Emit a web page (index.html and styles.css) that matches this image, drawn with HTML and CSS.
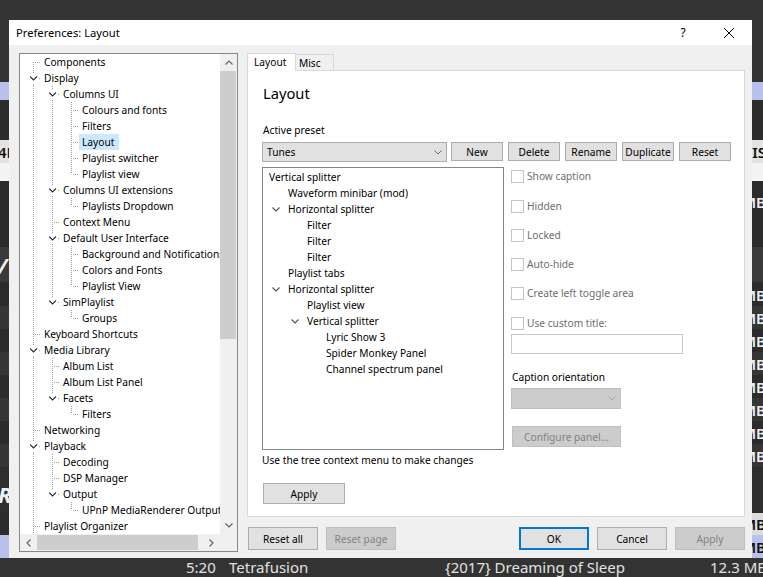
FILE: index.html
```html
<!DOCTYPE html>
<html>
<head>
<meta charset="utf-8">
<link rel="stylesheet" href="styles.css">
</head>
<body>
<div class="bg">
  <div class="bgrow r-top"></div>
  <div class="bgrow r-lav"></div>
  <div class="bgrow r-dark1"></div>
  <div class="bgrow r-light"><span class="bl dk">4K</span><span class="br dk">VIS</span></div>
  <div class="bgrow r-white"></div>
  <div class="bgrow r-dark2"><span class="bl"></span><span class="br">MB</span></div>
  <div class="bgrow r-dark2b"></div>
  <div class="bgrow r-mid"><span class="bl it">/</span><span class="br"></span></div>
  <div class="bgrow r-line"></div>
  <div class="bgrow r-a"><span class="bl"></span><span class="br">MB</span></div>
  <div class="bgrow r-b"><span class="bl"></span><span class="br">MB</span></div>
  <div class="bgrow r-a"><span class="bl"></span><span class="br">MB</span></div>
  <div class="bgrow r-b"><span class="bl"></span><span class="br">MB</span></div>
  <div class="bgrow r-a"><span class="bl"></span><span class="br">MB</span></div>
  <div class="bgrow r-b"><span class="bl"></span><span class="br">MB</span></div>
  <div class="bgrow r-a"><span class="bl"></span><span class="br">MB</span></div>
  <div class="bgrow r-b"><span class="bl"></span><span class="br">MB</span></div>
  <div class="bgrow r-dark3"><span class="bl it">R</span><span class="br"></span></div>
  <div class="bgrow r-light2"><span class="bl"></span><span class="br dk lightbg">MB</span></div>
  <div class="bgrow r-lav2"><span class="bl"></span><span class="br dk">MB</span></div>
  <div class="bgrow r-bottom">
    <span class="c-time">5:20</span><span class="c-title">Tetrafusion</span><span class="c-album">{2017} Dreaming of Sleep</span><span class="c-size">12.3 MB</span>
  </div>
</div>

<div class="dialog">
  <div class="titlebar">
    <span class="title">Preferences: Layout</span>
    <span class="tbtn help">?</span>
    <span class="tbtn close"><svg width="10" height="10" viewBox="0 0 10 10"><path d="M0 0L10 10M10 0L0 10" stroke="#000" stroke-width="1" fill="none"/></svg></span>
  </div>
  <div class="dbody">
    <div class="navtree">
      <div class="navrows">
        <div class="nr"><i class="it b"></i><span class="nl">Components</span></div>
        <div class="nr"><i class="it tb x"><svg class="chev" viewBox="0 0 8 5"><path d="M.5 .5L4 4L7.5 .5"/></svg></i><span class="nl">Display</span></div>
        <div class="nr"><i class="gv"></i><i class="it tb x"><svg class="chev" viewBox="0 0 8 5"><path d="M.5 .5L4 4L7.5 .5"/></svg></i><span class="nl">Columns UI</span></div>
        <div class="nr"><i class="gv"></i><i class="gv"></i><i class="it tb"></i><span class="nl">Colours and fonts</span></div>
        <div class="nr"><i class="gv"></i><i class="gv"></i><i class="it tb"></i><span class="nl">Filters</span></div>
        <div class="nr"><i class="gv"></i><i class="gv"></i><i class="it tb"></i><span class="nl sel">Layout</span></div>
        <div class="nr"><i class="gv"></i><i class="gv"></i><i class="it tb"></i><span class="nl">Playlist switcher</span></div>
        <div class="nr"><i class="gv"></i><i class="gv"></i><i class="it t"></i><span class="nl">Playlist view</span></div>
        <div class="nr"><i class="gv"></i><i class="it tb x"><svg class="chev" viewBox="0 0 8 5"><path d="M.5 .5L4 4L7.5 .5"/></svg></i><span class="nl">Columns UI extensions</span></div>
        <div class="nr"><i class="gv"></i><i class="gv"></i><i class="it t"></i><span class="nl">Playlists Dropdown</span></div>
        <div class="nr"><i class="gv"></i><i class="it tb"></i><span class="nl">Context Menu</span></div>
        <div class="nr"><i class="gv"></i><i class="it tb x"><svg class="chev" viewBox="0 0 8 5"><path d="M.5 .5L4 4L7.5 .5"/></svg></i><span class="nl">Default User Interface</span></div>
        <div class="nr"><i class="gv"></i><i class="gv"></i><i class="it tb"></i><span class="nl">Background and Notifications</span></div>
        <div class="nr"><i class="gv"></i><i class="gv"></i><i class="it tb"></i><span class="nl">Colors and Fonts</span></div>
        <div class="nr"><i class="gv"></i><i class="gv"></i><i class="it t"></i><span class="nl">Playlist View</span></div>
        <div class="nr"><i class="gv"></i><i class="it t x"><svg class="chev" viewBox="0 0 8 5"><path d="M.5 .5L4 4L7.5 .5"/></svg></i><span class="nl">SimPlaylist</span></div>
        <div class="nr"><i class="gv"></i><i class="ge"></i><i class="it t"></i><span class="nl">Groups</span></div>
        <div class="nr"><i class="it tb"></i><span class="nl">Keyboard Shortcuts</span></div>
        <div class="nr"><i class="it tb x"><svg class="chev" viewBox="0 0 8 5"><path d="M.5 .5L4 4L7.5 .5"/></svg></i><span class="nl">Media Library</span></div>
        <div class="nr"><i class="gv"></i><i class="it tb"></i><span class="nl">Album List</span></div>
        <div class="nr"><i class="gv"></i><i class="it tb"></i><span class="nl">Album List Panel</span></div>
        <div class="nr"><i class="gv"></i><i class="it t x"><svg class="chev" viewBox="0 0 8 5"><path d="M.5 .5L4 4L7.5 .5"/></svg></i><span class="nl">Facets</span></div>
        <div class="nr"><i class="gv"></i><i class="ge"></i><i class="it t"></i><span class="nl">Filters</span></div>
        <div class="nr"><i class="it tb"></i><span class="nl">Networking</span></div>
        <div class="nr"><i class="it tb x"><svg class="chev" viewBox="0 0 8 5"><path d="M.5 .5L4 4L7.5 .5"/></svg></i><span class="nl">Playback</span></div>
        <div class="nr"><i class="gv"></i><i class="it tb"></i><span class="nl">Decoding</span></div>
        <div class="nr"><i class="gv"></i><i class="it tb"></i><span class="nl">DSP Manager</span></div>
        <div class="nr"><i class="gv"></i><i class="it t x"><svg class="chev" viewBox="0 0 8 5"><path d="M.5 .5L4 4L7.5 .5"/></svg></i><span class="nl">Output</span></div>
        <div class="nr"><i class="gv"></i><i class="ge"></i><i class="it t"></i><span class="nl">UPnP MediaRenderer Output</span></div>
        <div class="nr"><i class="it tb"></i><span class="nl">Playlist Organizer</span></div>
      </div>
      <div class="vscroll">
        <div class="sbtn"><svg class="arr" viewBox="0 0 8 5"><path d="M.5 4.5L4 1L7.5 4.5"/></svg></div>
        <div class="vthumb"></div>
        <div class="vtrack"></div>
        <div class="sbtn"><svg class="arr" viewBox="0 0 8 5"><path d="M.5 .5L4 4L7.5 .5"/></svg></div>
      </div>
      <div class="hscroll">
        <div class="sbtn"><svg class="arr h" viewBox="0 0 5 8"><path d="M4.5 .5L1 4L4.5 7.5"/></svg></div>
        <div class="hthumb"></div>
        <div class="htrack"></div>
        <div class="sbtn"><svg class="arr h" viewBox="0 0 5 8"><path d="M.5 .5L4 4L.5 7.5"/></svg></div>
      </div>
      <div class="corner"></div>
    </div>

    <div class="rcol">
      <div class="tabs">
        <div class="tab on">Layout</div>
        <div class="tab">Misc</div>
      </div>
      <div class="page">
        <div class="ptitle">Layout</div>
        <div class="plabel">Active preset</div>
        <div class="presetrow">
          <div class="combo"><span>Tunes</span><svg class="cchev" viewBox="0 0 8 5"><path d="M.5 .5L4 4L7.5 .5"/></svg></div>
          <div class="btn pbtn first">New</div>
          <div class="btn pbtn">Delete</div>
          <div class="btn pbtn">Rename</div>
          <div class="btn pbtn">Duplicate</div>
          <div class="btn pbtn">Reset</div>
        </div>
        <div class="pmain">
          <div class="pleft">
            <div class="ltree">
              <div class="lr"><span>Vertical splitter</span></div>
              <div class="lr"><i class="chc"></i><span>Waveform minibar (mod)</span></div>
              <div class="lr"><i class="chc"><svg class="chev" viewBox="0 0 8 5"><path d="M.5 .5L4 4L7.5 .5"/></svg></i><span>Horizontal splitter</span></div>
              <div class="lr"><i class="ind"></i><i class="chc"></i><span>Filter</span></div>
              <div class="lr"><i class="ind"></i><i class="chc"></i><span>Filter</span></div>
              <div class="lr"><i class="ind"></i><i class="chc"></i><span>Filter</span></div>
              <div class="lr"><i class="chc"></i><span>Playlist tabs</span></div>
              <div class="lr"><i class="chc"><svg class="chev" viewBox="0 0 8 5"><path d="M.5 .5L4 4L7.5 .5"/></svg></i><span>Horizontal splitter</span></div>
              <div class="lr"><i class="ind"></i><i class="chc"></i><span>Playlist view</span></div>
              <div class="lr"><i class="ind"></i><i class="chc"><svg class="chev" viewBox="0 0 8 5"><path d="M.5 .5L4 4L7.5 .5"/></svg></i><span>Vertical splitter</span></div>
              <div class="lr"><i class="ind"></i><i class="ind"></i><i class="chc"></i><span>Lyric Show 3</span></div>
              <div class="lr"><i class="ind"></i><i class="ind"></i><i class="chc"></i><span>Spider Monkey Panel</span></div>
              <div class="lr"><i class="ind"></i><i class="ind"></i><i class="chc"></i><span>Channel spectrum panel</span></div>
            </div>
            <div class="note">Use the tree context menu to make changes</div>
            <div class="btn applyl">Apply</div>
          </div>
          <div class="opts">
            <div class="cb c1"><i class="box"></i><span>Show caption</span></div>
            <div class="cb c2"><i class="box"></i><span>Hidden</span></div>
            <div class="cb c3"><i class="box"></i><span>Locked</span></div>
            <div class="cb c3"><i class="box"></i><span>Auto-hide</span></div>
            <div class="cb c3"><i class="box"></i><span>Create left toggle area</span></div>
            <div class="cb c2"><i class="box"></i><span>Use custom title:</span></div>
            <div class="tinput"></div>
            <div class="olabel">Caption orientation</div>
            <div class="dcombo"><svg class="cchev dis" viewBox="0 0 8 5"><path d="M.5 .5L4 4L7.5 .5"/></svg></div>
            <div class="btn dis cfg">Configure panel...</div>
          </div>
        </div>
      </div>
      <div class="dbtns">
        <div class="btn bb first">Reset all</div>
        <div class="btn bb dis">Reset page</div>
        <div class="btn bb ok">OK</div>
        <div class="btn bb">Cancel</div>
        <div class="btn bb dis">Apply</div>
      </div>
    </div>
  </div>
</div>
</body>
</html>
```
FILE: styles.css
```css
* { box-sizing: border-box; }
html, body { margin: 0; padding: 0; }
body {
  width: 763px; height: 577px; overflow: hidden; position: relative;
  background: #333333;
  font-family: "Noto Sans", "DejaVu Sans", sans-serif;
  font-size: 10.2px; color: #000;
}

/* background app */
.bg { display: flex; flex-direction: column; height: 577px; }
.bgrow {
  display: flex; align-items: center; justify-content: space-between;
  flex: none; overflow: hidden; white-space: nowrap;
  font-size: 15px; font-weight: 600; color: #f0f0f0;
}
.bgrow .bl { margin-left: -2px; }
.bgrow .br { margin-right: -3px; }
.bgrow .dk { color: #111; }
.bgrow .it { font-style: italic; font-size: 22px; font-weight: 700; }
.bgrow .lightbg { align-self: stretch; display: flex; align-items: center; background: #dcdcdc; padding-left: 4px; }
.r-top { height: 82px; background: #343434; }
.r-lav { height: 18px; background: #b9c0ec; }
.r-dark1 { height: 40px; background: #2c2c2c; }
.r-light { height: 23px; background: #e3e3e3; }
.r-white { height: 18px; background: #f4f4f4; }
.r-dark2 { height: 42px; background: #2b2b2b; }
.r-dark2b { height: 24px; background: #2b2b2b; }
.r-mid { height: 35px; background: #3a3a3a; }
.r-line { height: 1px; background: #2b2b2b; }
.r-a { height: 23px; background: #2c2c2c; }
.r-b { height: 23px; background: #363636; }
.r-dark3 { height: 46px; background: #2e2e2e; padding-top: 8px; }
.r-light2 { height: 22px; background: #2c2c2c; }
.r-lav2 { height: 23px; background: #b9c0ec; }
.r-bottom {
  flex: 1; background: #333333;
  display: grid; grid-template-columns: 186px 43px 216px 265px auto;
  justify-content: start; align-items: center;
  font-weight: 400; color: #e2e2e2; font-size: 15px; line-height: 19px;
}
.c-time { grid-column: 2; }
.c-title { grid-column: 3; }
.c-album { grid-column: 4; }
.c-size { grid-column: 5; }

/* dialog */
.dialog {
  position: absolute; left: 9px; top: 20px; width: 743px; height: 538px;
  background: #f0f0f0; display: flex; flex-direction: column;
}
.titlebar {
  height: 25px; flex: none; background: #fff;
  display: flex; align-items: center; padding-left: 7px;
}
.title { font-size: 11.2px; flex: 1; }
.tbtn {
  width: 46px; height: 25px; display: flex; align-items: center; justify-content: center;
  font-size: 12px;
}
.dbody {
  display: grid; grid-template-columns: 219px 498px; column-gap: 9px;
  padding: 8px 7px 0 10px;
}

/* nav tree */
.navtree {
  height: 499px; border: 1px solid #828790; background: #fff;
  display: grid; grid-template-columns: 200px 17px; grid-template-rows: 480px 17px;
}
.navrows { padding-left: 4px; overflow: hidden; }
.nr { display: flex; height: 16px; align-items: center; white-space: nowrap; }
.nr i { flex: none; display: block; height: 16px; }
.gv, .ge { width: 19px; }
.gv {
  background: repeating-linear-gradient(to bottom, #a0a0a0 0 1px, transparent 1px 2px) 9px 0 / 1px 16px no-repeat;
}
.it { width: 17px; }
.it.tb {
  background:
    repeating-linear-gradient(to bottom, #a0a0a0 0 1px, transparent 1px 2px) 9px 0 / 1px 16px no-repeat,
    repeating-linear-gradient(to right, transparent 0 1px, #a0a0a0 1px 2px) 10px 8px / 7px 1px no-repeat;
}
.it.t {
  background:
    repeating-linear-gradient(to bottom, #a0a0a0 0 1px, transparent 1px 2px) 9px 0 / 1px 8px no-repeat,
    repeating-linear-gradient(to right, transparent 0 1px, #a0a0a0 1px 2px) 10px 8px / 7px 1px no-repeat;
}
.it.b {
  background:
    repeating-linear-gradient(to bottom, #a0a0a0 0 1px, transparent 1px 2px) 9px 8px / 1px 8px no-repeat,
    repeating-linear-gradient(to right, transparent 0 1px, #a0a0a0 1px 2px) 10px 8px / 7px 1px no-repeat;
}
.it.x { display: flex; align-items: center; }
.it.x .chev { margin-left: 5px; width: 9px; height: 9px; padding: 2px 0.5px; background: #fff; }
.chev path { fill: none; stroke: #2a2a2a; stroke-width: 1.1; }
.nl { line-height: 16px; height: 16px; padding: 0 5px 0 3px; }
.nl.sel { background: #cce8ff; }

.vscroll { background: #f0f0f0; display: flex; flex-direction: column; }
.sbtn { width: 17px; height: 17px; flex: none; display: flex; align-items: center; justify-content: center; }
.arr { width: 8px; height: 5px; }
.arr.h { width: 5px; height: 8px; }
.arr path { fill: none; stroke: #606060; stroke-width: 1.1; }
.vthumb { height: 268px; margin: 0 1px 0 0; background: #cdcdcd; }
.vtrack { flex: 1; }
.hscroll { background: #f0f0f0; display: flex; }
.hthumb { width: 161px; margin: 1px 0; background: #cdcdcd; }
.htrack { flex: 1; }
.corner { background: #f0f0f0; }

/* right column */
.rcol { display: flex; flex-direction: column; }
.tabs { display: flex; align-items: flex-end; height: 18px; margin-bottom: -1px; position: relative; z-index: 1; }
.tab {
  width: 38px; height: 16px; margin-bottom: 1px;
  border: 1px solid #d9d9d9; border-left: 0; border-bottom: 0;
  padding: 1px 0 0 3px; line-height: 14px; background: #f0f0f0;
}
.tab.on {
  width: 49px; height: 18px; margin-bottom: 0; border-left: 1px solid #d9d9d9;
  background: #fff; padding: 0 0 0 6px; line-height: 17px;
}
.page {
  height: 447px; border: 1px solid #d9d9d9; background: #fff;
  padding-left: 14px; display: flex; flex-direction: column;
}
.ptitle { font-size: 14.7px; line-height: 20px; margin: 12px 0 0 1px; }
.plabel { line-height: 16px; margin: 19px 0 0 1px; }
.presetrow { display: flex; align-items: flex-start; margin-top: 4px; }
.combo {
  width: 185px; height: 20px; border: 1px solid #adadad; background: #e1e1e1;
  display: flex; align-items: center; padding-left: 4px;
}
.cchev { width: 8px; height: 5px; margin-left: auto; margin-right: 4px; }
.cchev path { fill: none; stroke: #6a6a6a; stroke-width: 1; }
.cchev.dis path { stroke: #a8a8a8; }
.btn {
  border: 1px solid #adadad; background: #e1e1e1;
  display: flex; align-items: center; justify-content: center; white-space: nowrap;
}
.btn.dis { background: #cccccc; border-color: #bfbfbf; color: #838383; }
.pbtn { width: 52px; height: 19px; margin-left: 5px; }
.pbtn.first { margin-left: 4px; }

.pmain { display: flex; margin-top: 5px; }
.pleft { display: flex; flex-direction: column; width: 242px; }
.ltree { width: 242px; height: 283px; border: 1px solid #828790; padding-top: 1px; }
.lr { display: flex; align-items: center; height: 16px; padding-left: 6px; white-space: nowrap; }
.lr i { flex: none; display: block; height: 16px; }
.ind { width: 19px; }
.chc { width: 19px; display: flex !important; align-items: center; }
.chc .chev { width: 8px; height: 5px; margin-left: 3px; }
.chc .chev path { stroke: #505050; }
.note { line-height: 16px; margin-top: 2px; }
.applyl { width: 82px; height: 21px; margin: 15px 0 0 1px; }

.opts { margin-left: 7px; display: flex; flex-direction: column; }
.cb { display: flex; align-items: center; height: 16px; color: #6d6d6d; }
.cb .box { width: 13px; height: 13px; border: 1px solid #c4c4c4; background: #fff; margin-right: 3px; flex: none; }
.cb.c1 { margin-top: 1px; }
.cb.c2 { margin-top: 14px; }
.cb.c3 { margin-top: 13px; }
.tinput { width: 172px; height: 20px; border: 1px solid #c9c9c9; background: #fff; margin-top: 3px; }
.olabel { line-height: 16px; margin: 15px 0 0 1px; }
.dcombo {
  width: 110px; height: 21px; margin-top: 3px; background: #cccccc; border: 1px solid #bfbfbf;
  display: flex; align-items: center;
}
.cfg { width: 109px; height: 21px; margin: 17px 0 0 1px; }

.dbtns { display: flex; margin-top: 10px; }
.bb { width: 70px; height: 23px; margin-left: 8px; }
.bb.first { margin-left: 1px; }
.bb.ok { margin-left: auto; border: 2px solid #0078d7; }
```
